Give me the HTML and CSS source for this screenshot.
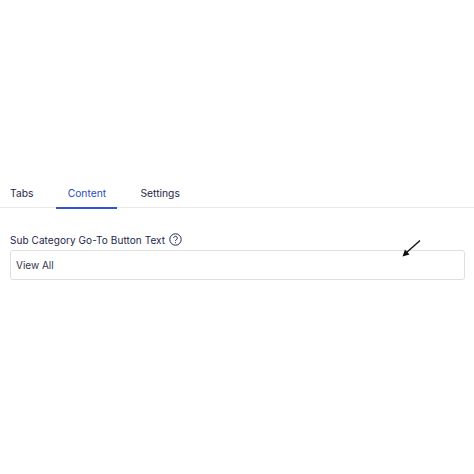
FILE: index.html
```html
<!DOCTYPE html>
<html lang="en">
<head>
  <meta charset="UTF-8">
  <title>Content settings</title>
  <link rel="stylesheet" href="styles.css">
</head>
<body>

<div class="tabs">
  <div class="tab">Tabs</div>
  <div class="tab active">Content</div>
  <div class="tab">Settings</div>
</div>

<div class="field">
  <label class="field-label">
    Sub Category Go-To Button Text
    <svg class="help" width="13" height="13" viewBox="0 0 13 13" fill="none" stroke="#23264a" stroke-width="1">
      <circle cx="6.5" cy="6.5" r="5.7"/>
      <path d="M4.7 5.1a1.8 1.8 0 1 1 2.8 1.5c-.7.4-1 .7-1 1.4"/>
      <path d="M6.5 9.2v.9"/>
    </svg>
  </label>
  <div class="input-wrap">
    <div class="input">View All</div>
    <svg class="arrow" width="22" height="20" viewBox="0 0 22 20">
      <path d="M20 1.5 6 14" stroke="#111" stroke-width="1.4" fill="none"/>
      <path d="M2.5 17.5 5 10.5 9.5 15.5Z" fill="#111"/>
    </svg>
  </div>
</div>

</body>
</html>
```

FILE: styles.css
```css
body {
  margin: 0;
  padding-top: 178px;
  font-family: Inter, "Liberation Sans", sans-serif;
  font-size: 10px;
  color: #23264a;
  background: #fff;
}

.tabs {
  display: flex;
  height: 29px;
  padding-left: 10px;
  border-bottom: 1px solid #e9e9ec;
  font-size: 10.3px;
}

.tab {
  line-height: 31px;
  margin-right: 23px;
}

.tab.active {
  width: 61px;
  height: 29px;
  text-align: center;
  color: #2a4bc0;
  border-bottom: 2px solid #2f55d4;
}

.field {
  padding: 0 9px 0 10px;
  margin-top: 24px;
}

.field-label {
  display: flex;
  align-items: center;
  gap: 4px;
  height: 15px;
  letter-spacing: 0.07px;
}

.input-wrap {
  position: relative;
  margin-top: 3px;
}

.input {
  height: 28px;
  padding-left: 5px;
  line-height: 28px;
  color: #33354f;
  border: 1.5px solid #dfdfe2;
  border-radius: 3px;
}

.arrow {
  position: absolute;
  top: -11px;
  right: 43px;
}
```
